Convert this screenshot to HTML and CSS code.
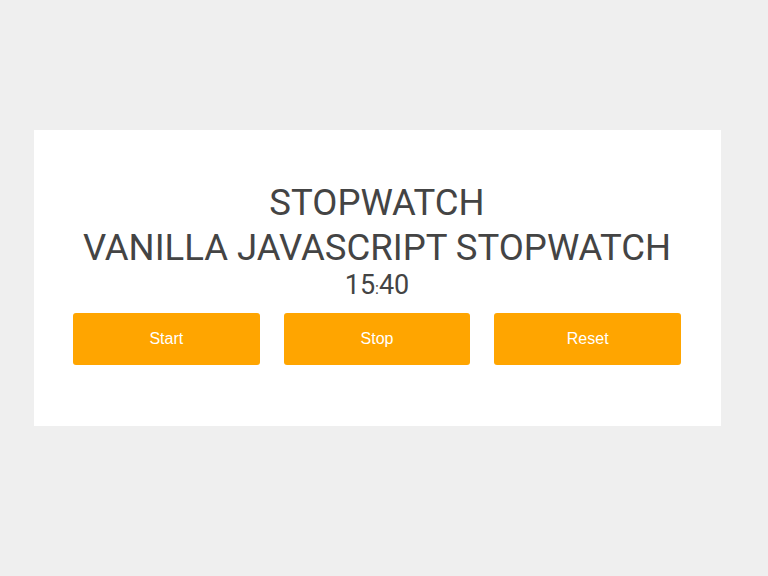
FILE: index.html
```html
<!DOCTYPE html>
<html lang="en">

<head>
   <meta charset="UTF-8">
   <meta name="viewport" content="width=device-width, initial-scale=1.0">
   <title>Stopwatch</title>
   <link rel="stylesheet" href="styles.css">
</head>

<body>
   <div class="wrapper">
      <h1 class="title">Stopwatch<br>Vanilla JavaScript Stopwatch</h1>
      <p class="time"><span id="seconds">15</span><span class="colon">:</span><span id="tens">40</span></p>
      <div class="buttons">
         <button id="button-start" class="btn">Start</button>
         <button id="button-stop" class="btn">Stop</button>
         <button id="button-reset" class="btn">Reset</button>
      </div>
   </div>

   <script>
      let seconds = 15;
      let tens = 40;
      let interval = null;
      const secondsEl = document.getElementById('seconds');
      const tensEl = document.getElementById('tens');

      const pad = (n) => (n < 10 ? '0' + n : '' + n);

      function tick() {
         tens++;
         if (tens > 99) {
            seconds++;
            tens = 0;
         }
         secondsEl.textContent = pad(seconds);
         tensEl.textContent = pad(tens);
      }

      document.getElementById('button-start').addEventListener('click', () => {
         clearInterval(interval);
         interval = setInterval(tick, 10);
      });

      document.getElementById('button-stop').addEventListener('click', () => {
         clearInterval(interval);
      });

      document.getElementById('button-reset').addEventListener('click', () => {
         clearInterval(interval);
         seconds = 0;
         tens = 0;
         secondsEl.textContent = '00';
         tensEl.textContent = '00';
      });
   </script>
</body>

</html>
```

FILE: styles.css
```css
* {
   margin: 0;
   padding: 0;
   box-sizing: border-box;
}

body {
   background: #efefef;
   font-family: Roboto, 'Liberation Sans', sans-serif;
   color: #444;
   padding-top: 130px;
   padding-left: 34px;
}

.wrapper {
   width: 687px;
   height: 296px;
   background: #fff;
   padding: 50px 40px 0 39px;
   text-align: center;
}

.title {
   font-size: 36.5px;
   font-weight: 400;
   line-height: 45px;
   text-transform: uppercase;
}

.time {
   font-size: 27px;
   line-height: 30px;
}

.colon {
   font-size: 16px;
}

.buttons {
   display: flex;
   gap: 24px;
   margin-top: 9px;
}

.btn {
   flex: 1;
   height: 52px;
   border: none;
   border-radius: 3px;
   background: #ffa500;
   color: #fff;
   font-family: 'Liberation Sans', Arial, sans-serif;
   font-size: 16px;
   cursor: pointer;
}
```
